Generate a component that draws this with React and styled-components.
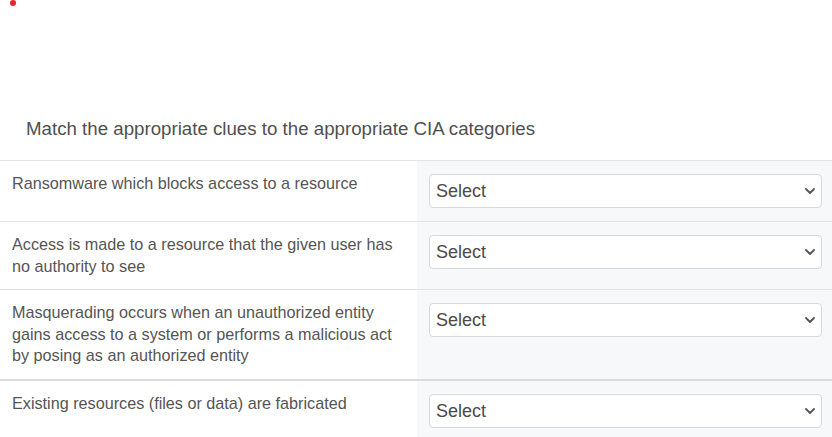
import React from 'react';
import styled, { createGlobalStyle } from 'styled-components';

const GlobalStyle = createGlobalStyle`
  html, body {
    margin: 0;
    padding: 0;
    background: #fff;
    font-family: 'Liberation Sans', Arial, sans-serif;
  }
`;

const Page = styled.div`
  width: 832px;
  height: 437px;
  overflow: hidden;
  position: relative;
`;

const Dot = styled.span`
  display: block;
  width: 6px;
  height: 6px;
  margin-left: 10px;
  border-radius: 50%;
  background: #e8262b;
`;

const Heading = styled.h3`
  margin: 113px 0 21px 26px;
  font-size: 18.7px;
  line-height: 20px;
  font-weight: 400;
  color: #505050;
`;

const Table = styled.div`
  display: flex;
  flex-direction: column;
`;

const Row = styled.div`
  display: grid;
  grid-template-columns: 417px 1fr;
  border-top: ${p => (p.$thick ? '2px solid #dcdcdc' : '1px solid #e4e4e4')};
`;

const Clue = styled.div`
  padding: 12px 12px 12px 12px;
  font-size: 16.2px;
  line-height: 21.6px;
  color: #555;
`;

const Answer = styled.div`
  background: #f7f8fa;
  padding: 13px 10px 13px 12px;
`;

const SelectWrap = styled.div`
  position: relative;
`;

const Select = styled.select`
  appearance: none;
  -webkit-appearance: none;
  width: 100%;
  height: 34px;
  padding: 0 28px 0 6px;
  border: 1px solid #d9d9d9;
  border-radius: 4px;
  background: #fff;
  font-family: 'Liberation Sans', Arial, sans-serif;
  font-size: 18px;
  color: #4a4a4a;
  outline: none;
`;

const Chevron = styled.svg`
  position: absolute;
  right: 7px;
  top: 50%;
  width: 10px;
  height: 6px;
  margin-top: -3px;
  pointer-events: none;
`;

const clues = [
  'Ransomware which blocks access to a resource',
  'Access is made to a resource that the given user has no authority to see',
  'Masquerading occurs when an unauthorized entity gains access to a system or performs a malicious act by posing as an authorized entity',
  'Existing resources (files or data) are fabricated',
];

const Dropdown = () => (
  <SelectWrap>
    <Select defaultValue="">
      <option value="">Select</option>
      <option value="c">Confidentiality</option>
      <option value="i">Integrity</option>
      <option value="a">Availability</option>
    </Select>
    <Chevron viewBox="0 0 10 6">
      <path d="M1 1l4 4 4-4" fill="none" stroke="#555" strokeWidth="1.8" strokeLinecap="round" strokeLinejoin="round" />
    </Chevron>
  </SelectWrap>
);

const App = () => (
  <Page>
    <GlobalStyle />
    <Dot />
    <Heading>Match the appropriate clues to the appropriate CIA categories</Heading>
    <Table>
      {clues.map((clue, i) => (
        <Row key={i} $thick={i === 3}>
          <Clue>{clue}</Clue>
          <Answer>
            <Dropdown />
          </Answer>
        </Row>
      ))}
    </Table>
  </Page>
);

export default App;
